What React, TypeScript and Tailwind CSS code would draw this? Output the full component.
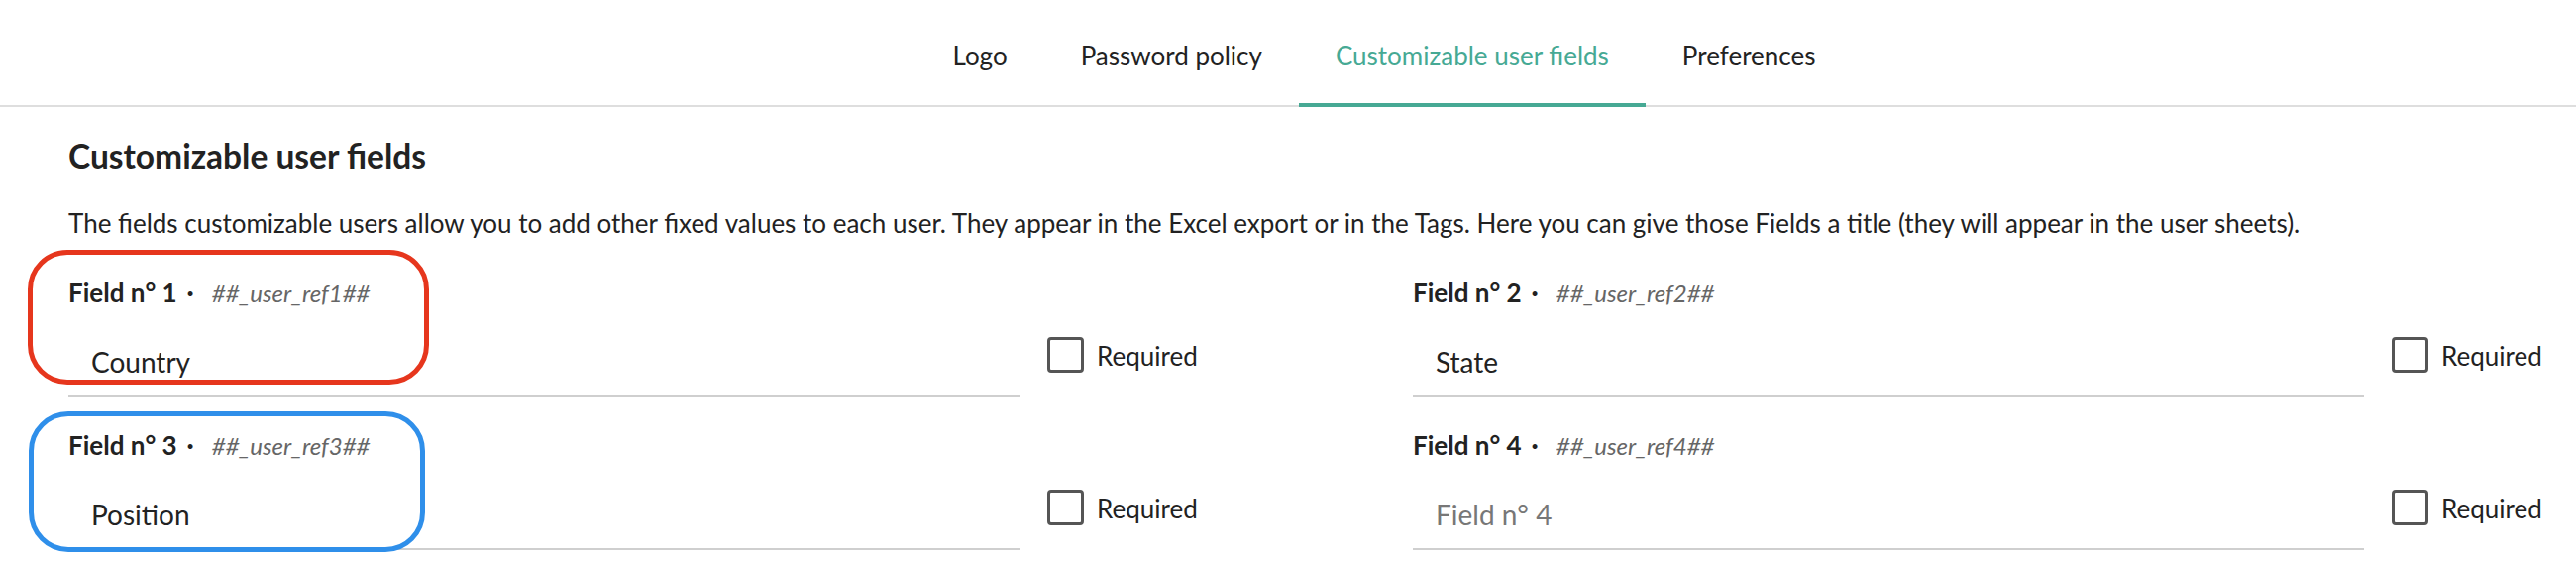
import React from "react";

const tabs = ["Logo", "Password policy", "Customizable user fields", "Preferences"];

function Checkbox() {
  return (
    <div className="flex items-center mt-[60px] ml-[28px]">
      <div className="w-[37px] h-[36px] border-[3px] border-[#555555] rounded-[4px] bg-white" />
      <span className="ml-[13px] mt-[3px] text-[26px] leading-[31px] text-[#222222]">Required</span>
    </div>
  );
}

function Field({
  n,
  value,
  annotation,
}: {
  n: number;
  value?: string;
  annotation?: "red" | "blue";
}) {
  return (
    <div className="flex items-start">
      <div className="relative flex flex-col w-[960px]">
        {annotation === "red" && (
          <div className="absolute left-[-41px] top-[-28px] w-[405px] h-[136px] border-[5px] border-[#e6361d] rounded-[40px] pointer-events-none" />
        )}
        {annotation === "blue" && (
          <div className="absolute left-[-40px] top-[-19px] w-[400px] h-[142px] border-[5px] border-[#2f8fea] rounded-[40px] pointer-events-none" />
        )}
        <div className="flex items-baseline h-[31px] leading-[31px]">
          <span className="text-[26px] font-bold text-[#222222]">Field n° {n}</span>
          <span className="ml-[10px] mr-[18px] text-[26px] font-bold text-[#222222]">·</span>
          <span className="text-[24px] italic text-[#666666]">##_user_ref{n}##</span>
        </div>
        <div className="mt-[37px] pl-[23px] pb-[17px] border-b-2 border-[#cfcfcf] text-[28px] leading-[34px]">
          {value ? (
            <span className="text-[#222222]">{value}</span>
          ) : (
            <span className="text-[#777777]">Field n° {n}</span>
          )}
        </div>
      </div>
      <Checkbox />
    </div>
  );
}

export default function App() {
  return (
    <div
      className="w-[2600px] h-[570px] bg-white overflow-hidden text-[#222222]"
      style={{ fontFamily: "Lato, 'Open Sans', sans-serif" }}
    >
      <nav className="h-[108px] border-b-2 border-[#dedede] flex justify-center pl-[194px]">
        {tabs.map((t) => {
          const active = t === "Customizable user fields";
          return (
            <div
              key={t}
              className={
                "px-[37px] pt-[41px] text-[26px] leading-[31px] border-b-4 -mb-[2px] " +
                (active ? "border-[#46a994] text-[#46a994]" : "border-transparent text-[#222222]")
              }
            >
              {t}
            </div>
          );
        })}
      </nav>
      <div className="pl-[69px]">
        <h1 className="mt-[29px] text-[33.5px] leading-[41px] font-bold text-[#222222]">
          Customizable user fields
        </h1>
        <p className="mt-[32px] text-[26px] leading-[31px] text-[#222222]">
          The fields customizable users allow you to add other fixed values to each user. They appear in the Excel export or in the Tags. Here you can give those Fields a title (they will appear in the user sheets).
        </p>
        <div className="mt-[39px] grid grid-cols-[1357px_1fr] gap-y-[33px]">
          <Field n={1} value="Country" annotation="red" />
          <Field n={2} value="State" />
          <Field n={3} value="Position" annotation="blue" />
          <Field n={4} />
        </div>
      </div>
    </div>
  );
}
